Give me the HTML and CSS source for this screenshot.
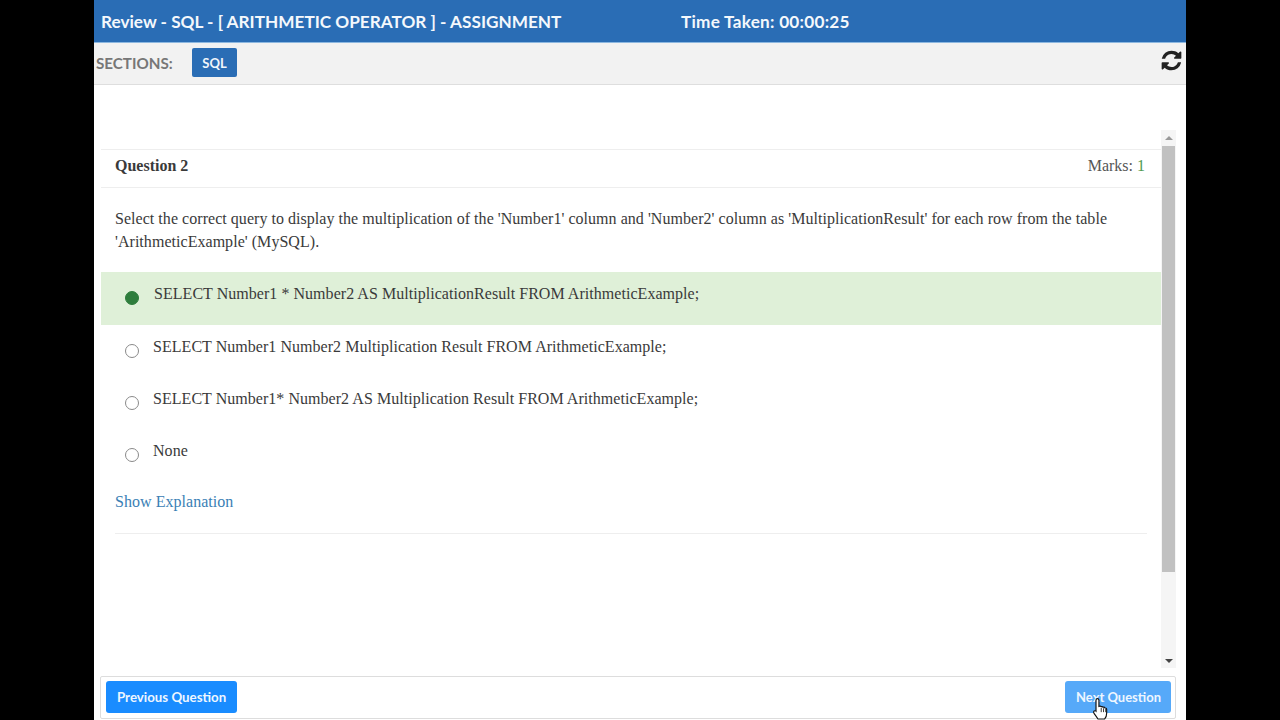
FILE: index.html
```html
<!DOCTYPE html>
<html lang="en">
<head>
<meta charset="utf-8">
<title>Review</title>
<link rel="stylesheet" href="styles.css">
</head>
<body>
<div class="app">
  <header class="topbar">
    <span class="title">Review - SQL - [ ARITHMETIC OPERATOR ] - ASSIGNMENT</span>
    <span class="timer">Time Taken: 00:00:25</span>
  </header>
  <div class="sections">
    <span class="sections-label">SECTIONS:</span>
    <span class="section-btn">SQL</span>
    <svg class="refresh" viewBox="0 0 1792 1792" width="23" height="23" aria-hidden="true">
      <path d="M1639 1056q0 5-1 7-64 268-268 434.5t-478 166.5q-146 0-282.5-55t-243.5-157l-129 129q-19 19-45 19t-45-19-19-45v-448q0-26 19-45t45-19h448q26 0 45 19t19 45-19 45l-137 137q71 66 161 102t187 36q134 0 250-65t186-179q11-17 53-117 8-23 30-23h192q13 0 22.5 9.5t9.5 22.5zm25-800v448q0 26-19 45t-45 19h-448q-26 0-45-19t-19-45 19-45l138-138q-148-137-349-137-134 0-250 65t-186 179q-11 17-53 117-8 23-30 23h-199q-13 0-22.5-9.5t-9.5-22.5v-7q65-268 270-434.5t480-166.5q146 0 284 55.5t245 156.5l130-129q19-19 45-19t45 19 19 45z"/>
    </svg>
  </div>
  <div class="body">
    <main class="pane">
      <div class="q-head">
        <span class="q-num">Question 2</span>
        <span class="marks">Marks: <span class="marks-val">1</span></span>
      </div>
      <p class="q-text">Select the correct query to display the multiplication of the 'Number1' column and 'Number2' column as 'MultiplicationResult' for each row from the table 'ArithmeticExample' (MySQL).</p>
      <div class="opt opt-correct"><span class="radio radio-on"></span><span>SELECT Number1 * Number2 AS MultiplicationResult FROM ArithmeticExample;</span></div>
      <div class="opt"><span class="radio"></span><span>SELECT Number1 Number2 Multiplication Result FROM ArithmeticExample;</span></div>
      <div class="opt"><span class="radio"></span><span>SELECT Number1* Number2 AS Multiplication Result FROM ArithmeticExample;</span></div>
      <div class="opt"><span class="radio"></span><span>None</span></div>
      <a class="explain">Show Explanation</a>
      <div class="rule"></div>
    </main>
    <div class="scrollbar">
      <span class="arrow arrow-up"></span>
      <span class="thumb"></span>
      <span class="arrow arrow-down"></span>
    </div>
  </div>
  <footer class="footer">
    <span class="btn">Previous Question</span>
    <span class="btn btn-hover">Next Question</span>
    <svg class="cursor" viewBox="0 0 16 22" width="17" height="23" aria-hidden="true">
      <path d="M5 1.5c.9 0 1.5.6 1.5 1.5v6l.6-.2c.7-.2 1.3 0 1.6.5.7-.3 1.4-.1 1.8.5.7-.3 1.5 0 1.8.7.8-.1 1.6.4 1.6 1.4v3.6c0 2.6-1.4 4.9-1.9 5.5H5.6c-1-1.6-2.4-3.5-3.8-5.4-.6-.8-.5-1.7.1-2.2.6-.4 1.3-.3 1.8.2V3c0-.9.5-1.5 1.3-1.5z" fill="#fff" stroke="#111" stroke-width="1.1"/>
      <path d="M8.7 10.5v4M10.9 10.8v3.7M13 11.4v3.1" stroke="#111" stroke-width=".8" fill="none"/>
    </svg>
  </footer>
</div>
</body>
</html>
```
FILE: styles.css
```css
* { box-sizing: border-box; }
html, body { margin: 0; height: 100%; background: #000; overflow: hidden; }
.app {
  width: 1092px; height: 720px; margin-left: 94px; background: #fff;
  display: flex; flex-direction: column; position: relative;
  font-family: "Liberation Serif", serif; font-size: 16px; color: #3a3a3a;
}
.topbar {
  height: 43px; flex: none; background: #2a6db5; color: #f4f8fc;
  display: flex; align-items: center; padding: 0 0 0 7px;
  font-family: Lato, sans-serif; font-weight: 700; font-size: 17.2px;
  border-bottom: 1px solid #8db8e0;
}
.title { width: 580px; white-space: nowrap; }
.timer { font-size: 17.15px; letter-spacing: .27px; white-space: nowrap; }
.sections {
  height: 42px; flex: none; background: #f2f2f2; border-bottom: 1px solid #dedede;
  display: flex; align-items: center; padding: 0 3px 1px 2px;
  font-family: Lato, sans-serif;
}
.sections-label { font-size: 15.2px; font-weight: 700; color: #777; width: 96px; white-space: nowrap; }
.section-btn {
  width: 45px; height: 29px; margin-bottom: 1px; background: #2a6db5; color: #f0f5fb; border-radius: 2px;
  display: flex; align-items: center; justify-content: center; font-size: 13px; font-weight: 700;
}
.refresh { margin-left: auto; margin-top: -5px; fill: #222; }
.body { flex: 1; min-height: 0; display: flex; padding: 45px 10px 8px 7px; }
.pane { flex: 1; min-width: 0; padding-top: 19px; letter-spacing: .04px; }
.q-head {
  height: 39px; padding: 0 16px 6px 14px;
  border-top: 1px solid #eee; border-bottom: 1px solid #eee;
  display: flex; justify-content: space-between; align-items: center;
  letter-spacing: 0;
}
.q-num { font-weight: 700; }
.marks { color: #555; }
.marks-val { color: #4f9a52; }
.q-text { margin: 19px 14px 19px; line-height: 23px; }
.opt { height: 52px; display: flex; align-items: flex-start; padding: 13px 0 0 24px; gap: 14px; white-space: nowrap; }
.opt-correct { height: 53px; background: #dff0d8; gap: 15px; }
.radio {
  width: 14px; height: 14px; margin-top: 6px; flex: none; border-radius: 50%;
  border: 1px solid #8a8a8a; background: #fff;
}
.radio-on { background: #2e7d3c; border-color: #2e7d3c; }
.explain { display: block; margin: 11px 0 0 14px; color: #3a80b5; line-height: 20px; }
.rule { height: 1px; margin: 21px 14px 0; background: #eee; }
.scrollbar {
  width: 15px; flex: none; background: #f5f5f5; display: flex; flex-direction: column;
  align-items: center;
}
.arrow { width: 0; height: 0; flex: none; border-left: 4px solid transparent; border-right: 4px solid transparent; }
.arrow-up { border-bottom: 4px solid #999; margin: 6px 0 6px; }
.arrow-down { border-top: 4px solid #444; margin: auto 0 5px; }
.thumb { width: 13px; height: 426px; background: #c1c1c1; }
.footer {
  height: 43px; flex: none; margin: 0 10px 1px 6px; border: 1px solid #ddd; border-radius: 2px;
  display: flex; justify-content: space-between; align-items: center; padding: 0 4px 1px 5px;
  position: relative;
}
.btn {
  height: 32px; padding: 0 11px; background: #1a8cff; color: #eef6ff; border-radius: 3px;
  display: flex; align-items: center; font-family: Lato, sans-serif; font-weight: 700; font-size: 13.3px;
}
.btn-hover { background: #56a9f9; font-size: 13px; padding: 0 10px 0 11px; }
.cursor { position: absolute; right: 66px; top: 20px; }
```
